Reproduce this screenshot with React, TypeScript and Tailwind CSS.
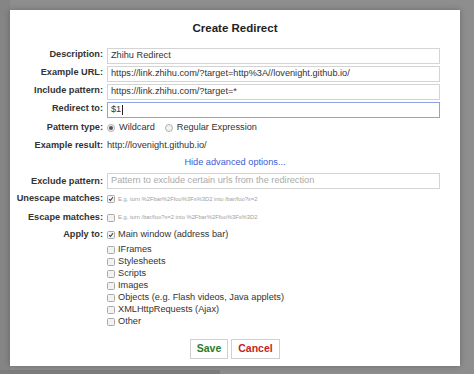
import React from "react";

const font = { fontFamily: '"Liberation Sans", Arial, sans-serif' };

const Check = ({ checked = false }: { checked?: boolean }) => (
  <span className="inline-flex h-[8px] w-[8px] shrink-0 items-center justify-center rounded-[1.5px] border border-[#a9a9a9] bg-[#f3f3f3]">
    {checked && (
      <svg viewBox="0 0 8 8" className="h-[8px] w-[8px]">
        <path d="M1.5 4.2 L3.2 6 L6.6 1.6" fill="none" stroke="#333" strokeWidth="1.4" />
      </svg>
    )}
  </span>
);

const Radio = ({ checked = false }: { checked?: boolean }) => (
  <span className="inline-flex h-[8px] w-[8px] shrink-0 items-center justify-center rounded-full border border-[#b0b0b0] bg-[#f3f3f3]">
    {checked && <span className="h-[4px] w-[4px] rounded-full bg-[#555]" />}
  </span>
);

const Row = ({ label, h, children }: { label: string; h: string; children: React.ReactNode }) => (
  <div className={`flex items-center ${h}`}>
    <div className="w-[93px] shrink-0 text-right text-[9.2px] font-bold text-[#333]">{label}</div>
    <div className="ml-[4px] flex w-[333px] items-center">{children}</div>
  </div>
);

const Field = ({ value, blue = false, placeholder = false }: { value: string; blue?: boolean; placeholder?: boolean }) => (
  <div
    className={`flex h-[16px] w-full items-center border px-[3px] text-[9.2px] ${
      blue ? "border-[#8ea3e6]" : "border-[#d4d4d4]"
    } ${placeholder ? "text-[#aaa]" : "text-[#333]"}`}
  >
    {value}
    {blue && <span className="ml-[1px] h-[10px] w-px bg-[#222]" />}
  </div>
);

const apply = ["IFrames", "Stylesheets", "Scripts", "Images", "Objects (e.g. Flash videos, Java applets)", "XMLHttpRequests (Ajax)", "Other"];

export default function App() {
  return (
    <div className="relative h-[374px] w-[474px] overflow-hidden bg-[#8e8e8e]" style={font}>
      <div className="absolute left-0 top-0 h-full w-[10px] bg-[#858585]" />
      <div className="absolute left-0 top-[370px] h-[4px] w-[220px] bg-[#7d7d7d]" />
      <div className="absolute left-[10px] top-[10px] h-[356px] w-[450px] bg-white shadow-[0_0_6px_rgba(0,0,0,0.25)]">
        <div className="h-[38px] pt-[11px] text-center text-[11.5px] font-bold leading-[14px] text-[#222]">Create Redirect</div>
        <Row label="Description:" h="h-[18px] items-start">
          <Field value="Zhihu Redirect" />
        </Row>
        <Row label="Example URL:" h="h-[18px] items-start">
          <Field value="https://link.zhihu.com/?target=http%3A//lovenight.github.io/" />
        </Row>
        <Row label="Include pattern:" h="h-[18px] items-start">
          <Field value="https://link.zhihu.com/?target=*" />
        </Row>
        <Row label="Redirect to:" h="h-[17px] items-start">
          <Field value="$1" blue />
        </Row>
        <Row label="Pattern type:" h="h-[18px]">
          <div className="flex items-center text-[9.2px] text-[#333]">
            <Radio checked />
            <span className="ml-[4px]">Wildcard</span>
            <span className="ml-[10px]" />
            <Radio />
            <span className="ml-[4px]">Regular Expression</span>
          </div>
        </Row>
        <Row label="Example result:" h="h-[17px]">
          <span className="text-[9.2px] text-[#333]">http://lovenight.github.io/</span>
        </Row>
        <div className="flex h-[17px] items-center justify-center text-[9.2px] text-[#3b5bd6]">Hide advanced options...</div>
        <Row label="Exclude pattern:" h="h-[18px] items-end">
          <Field value="Pattern to exclude certain urls from the redirection" placeholder />
        </Row>
        <Row label="Unescape matches:" h="h-[20px]">
          <Check checked />
          <span className="ml-[3px] text-[5.8px] text-[#a0a0a0]">E.g. turn %2Fbar%2Ffoo%3Fx%3D2 into /bar/foo?x=2</span>
        </Row>
        <Row label="Escape matches:" h="h-[17px]">
          <Check />
          <span className="ml-[3px] text-[5.8px] text-[#a0a0a0]">E.g. turn /bar/foo?x=2 into %2Fbar%2Ffoo%3Fx%3D2</span>
        </Row>
        <Row label="Apply to:" h="h-[18px]">
          <Check checked />
          <span className="ml-[3px] text-[9.2px] text-[#333]">Main window (address bar)</span>
        </Row>
        {apply.map((a) => (
          <div key={a} className="flex h-[12px] items-center pl-[97px]">
            <Check />
            <span className="ml-[3px] text-[9.2px] text-[#333]">{a}</span>
          </div>
        ))}
        <div className="mt-[11px] flex justify-center gap-[3px]">
          <button className="h-[20px] w-[38px] border border-[#d0d0d0] bg-white text-[10.5px] font-bold text-[#2a7d2a]">Save</button>
          <button className="h-[20px] w-[49px] border border-[#d0d0d0] bg-white text-[10.5px] font-bold text-[#c42424]">Cancel</button>
        </div>
      </div>
    </div>
  );
}
